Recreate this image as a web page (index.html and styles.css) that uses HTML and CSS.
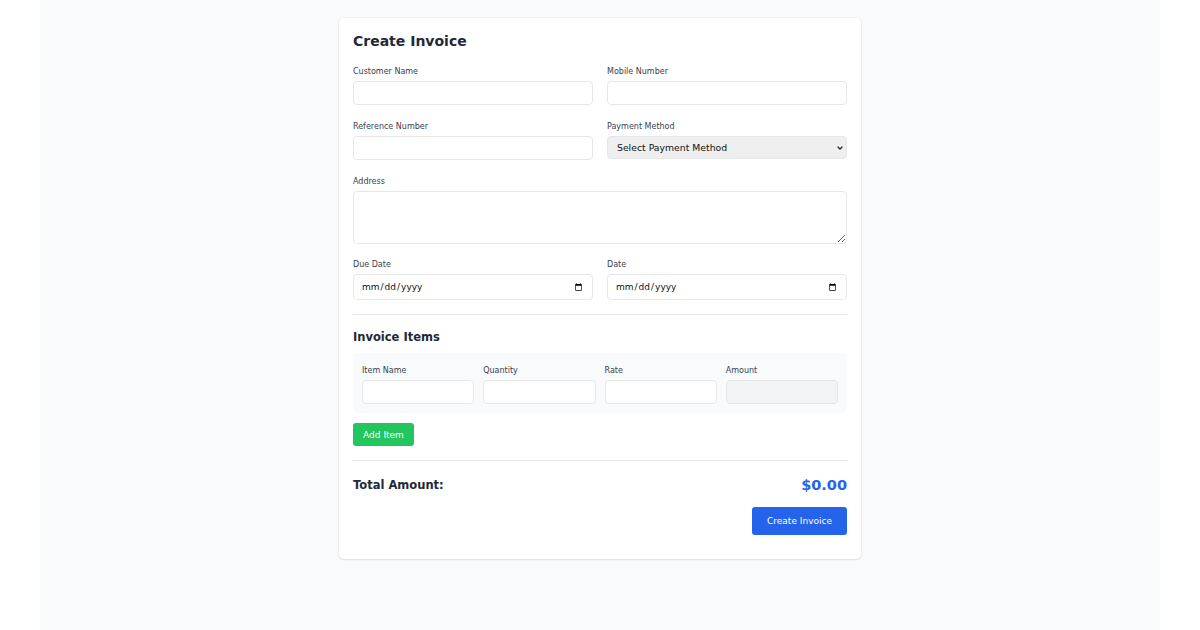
FILE: index.html
```html
<!DOCTYPE html>
<html lang="en">
<head>
<meta charset="utf-8">
<title>Create Invoice</title>
<link rel="stylesheet" href="styles.css">
</head>
<body>
<div class="page">
  <form class="card">
    <h1 class="title">Create Invoice</h1>
    <div class="grid2">
      <div class="field">
        <label class="label">Customer Name</label>
        <input class="input" type="text">
      </div>
      <div class="field">
        <label class="label">Mobile Number</label>
        <input class="input" type="text">
      </div>
      <div class="field">
        <label class="label">Reference Number</label>
        <input class="input" type="text">
      </div>
      <div class="field">
        <label class="label">Payment Method</label>
        <select class="select">
          <option>Select Payment Method</option>
        </select>
      </div>
    </div>
    <div class="field full">
      <label class="label">Address</label>
      <textarea class="textarea"></textarea>
    </div>
    <div class="grid2">
      <div class="field">
        <label class="label">Due Date</label>
        <input class="input date" type="date">
      </div>
      <div class="field">
        <label class="label">Date</label>
        <input class="input date" type="date">
      </div>
    </div>
    <hr class="divider">
    <h2 class="subtitle">Invoice Items</h2>
    <div class="items">
      <div class="field">
        <label class="label">Item Name</label>
        <input class="input" type="text">
      </div>
      <div class="field">
        <label class="label">Quantity</label>
        <input class="input" type="text">
      </div>
      <div class="field">
        <label class="label">Rate</label>
        <input class="input" type="text">
      </div>
      <div class="field">
        <label class="label">Amount</label>
        <input class="input readonly" type="text" readonly>
      </div>
    </div>
    <button type="button" class="btn-add">Add Item</button>
    <hr class="divider divider2">
    <div class="total">
      <span class="total-label">Total Amount:</span>
      <span class="total-value">$0.00</span>
    </div>
    <div class="actions">
      <button type="button" class="btn-submit">Create Invoice</button>
    </div>
  </form>
</div>
</body>
</html>
```

FILE: styles.css
```css
* { box-sizing: border-box; }
html, body { margin: 0; padding: 0; background: #ffffff; }
body { font-family: "DejaVu Sans", sans-serif; color: #1f2937; }

.page {
  width: 1120px;
  margin: 0 auto;
  min-height: 630px;
  background: #f9fafb;
  padding-top: 18px;
}

.card {
  width: 522px;
  margin: 0 auto;
  background: #ffffff;
  border-radius: 5px;
  box-shadow: 0 1px 2px rgba(0,0,0,0.08), 0 0 0 1px rgba(0,0,0,0.03);
  padding: 14px 14px 24px;
}

.title {
  margin: 0 0 17px;
  font-size: 14px;
  line-height: 18px;
  font-weight: 700;
  color: #1f2937;
}

.grid2 {
  display: grid;
  grid-template-columns: 1fr 1fr;
  column-gap: 14px;
  row-gap: 17px;
}

.field { display: flex; flex-direction: column; }
.full { margin-top: 17px; margin-bottom: 16px; }

.label {
  font-size: 8px;
  line-height: 10px;
  color: #374151;
  margin-bottom: 4px;
}

.input, .select, .textarea {
  font-family: "DejaVu Sans", sans-serif;
  width: 100%;
  border: 1px solid #e5e7eb;
  border-radius: 4px;
  background: #ffffff;
  height: 24px;
  margin: 0;
  font-size: 9px;
  color: #111827;
}

.select {
  -webkit-appearance: none;
  appearance: none;
  height: 23px;
  background-color: #efefef;
  background-image: url("data:image/svg+xml,%3Csvg xmlns='http://www.w3.org/2000/svg' width='6' height='4' viewBox='0 0 6 4'%3E%3Cpath d='M0.6 0.6 L3 3 L5.4 0.6' fill='none' stroke='%23222' stroke-width='1.3'/%3E%3C/svg%3E");
  background-repeat: no-repeat;
  background-position: right 3px center;
  background-size: 6px 4px;
  padding: 0 6px 0 9px;
  font-size: 9.3px;
  color: #111;
}

.date {
  height: 26px;
  padding: 0 7px;
  font-size: 9px;
  color: #111;
}

.textarea {
  height: 53px;
  resize: vertical;
}

.divider {
  border: 0;
  border-top: 1px solid #e5e7eb;
  margin: 14px 0 14px;
}

.subtitle {
  margin: 0 0 8px;
  font-size: 11.5px;
  line-height: 16px;
  font-weight: 700;
  color: #1f2937;
}

.items {
  display: grid;
  grid-template-columns: repeat(4, 1fr);
  column-gap: 9px;
  background: #f9fafb;
  border-radius: 5px;
  padding: 13px 9px 9px;
}

.readonly { background: #f3f4f6; }

.btn-add {
  display: block;
  margin-top: 10px;
  height: 23px;
  width: 61px;
  padding: 0;
  border: 0;
  border-radius: 3px;
  background: #22c55e;
  color: #ffffff;
  font-family: "DejaVu Sans", sans-serif;
  font-size: 9px;
}

.divider2 { margin: 14px 0 0; }

.total {
  display: flex;
  justify-content: space-between;
  align-items: center;
  margin-top: 14px;
  height: 20px;
}

.total-label {
  font-size: 11.5px;
  font-weight: 700;
  color: #1f2937;
}

.total-value {
  font-size: 14.5px;
  font-weight: 700;
  color: #2563eb;
}

.actions {
  display: flex;
  justify-content: flex-end;
  margin-top: 12px;
}

.btn-submit {
  height: 28px;
  width: 95px;
  padding: 0;
  border: 0;
  border-radius: 3px;
  background: #2563eb;
  color: #ffffff;
  font-family: "DejaVu Sans", sans-serif;
  font-size: 9px;
}
```
